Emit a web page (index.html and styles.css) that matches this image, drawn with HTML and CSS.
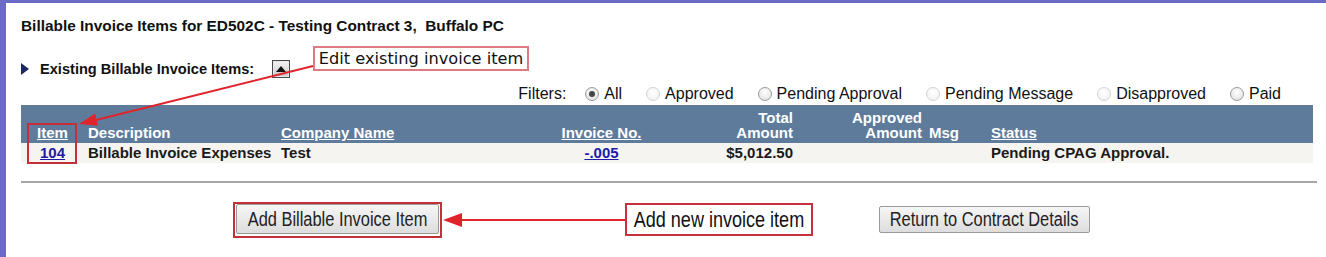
FILE: index.html
```html
<!DOCTYPE html>
<html>
<head>
<meta charset="utf-8">
<link rel="stylesheet" href="styles.css">
</head>
<body>
<div class="frame">
  <h1 class="title">Billable Invoice Items for ED502C - Testing Contract 3,&nbsp; Buffalo PC</h1>
  <div class="section-row">
    <svg class="section-tri" width="8" height="12" viewBox="0 0 8 12"><polygon points="0,0 8,6 0,12" fill="#1b2a5c"/></svg>
    <span class="section-label">Existing Billable Invoice Items:</span>
    <span class="collapse-btn"><svg width="10" height="6" viewBox="0 0 10 6"><polygon points="0,6 5,0 10,6" fill="#111"/></svg></span>
  </div>
  <div class="filters">
    <span class="filters-label">Filters:</span>
    <label class="opt"><span class="radio radio-on"></span>All</label>
    <label class="opt"><span class="radio radio-light"></span>Approved</label>
    <label class="opt"><span class="radio"></span>Pending Approval</label>
    <label class="opt"><span class="radio radio-light"></span>Pending Message</label>
    <label class="opt"><span class="radio radio-light"></span>Disapproved</label>
    <label class="opt"><span class="radio"></span>Paid</label>
  </div>
  <table class="items">
    <colgroup>
      <col class="c-item"><col class="c-desc"><col class="c-comp"><col class="c-inv"><col class="c-tot"><col class="c-appr"><col class="c-msg"><col class="c-status">
    </colgroup>
    <thead>
      <tr>
        <th class="center"><a class="hlink">Item</a></th>
        <th class="left">Description</th>
        <th class="left"><a class="hlink">Company Name</a></th>
        <th class="center"><a class="hlink">Invoice No.</a></th>
        <th class="right">Total<br>Amount</th>
        <th class="right">Approved<br>Amount</th>
        <th class="msg">Msg</th>
        <th class="left"><a class="hlink">Status</a></th>
      </tr>
    </thead>
    <tbody>
      <tr>
        <td class="center"><a class="dlink">104</a></td>
        <td class="left">Billable Invoice Expenses</td>
        <td class="left">Test</td>
        <td class="center"><a class="dlink">-.005</a></td>
        <td class="right">$5,012.50</td>
        <td class="right"></td>
        <td class="msg"></td>
        <td class="left">Pending CPAG Approval.</td>
      </tr>
    </tbody>
  </table>
  <hr class="divider">
  <div class="actions">
    <button class="btn btn-add"><span class="narrow">Add Billable Invoice Item</span></button>
    <button class="btn btn-return"><span class="narrow">Return to Contract Details</span></button>
  </div>
</div>

<div class="callout callout-edit">Edit existing invoice item</div>
<div class="callout callout-add"><span class="narrow">Add new invoice item</span></div>
<div class="hl hl-item"></div>
<div class="hl hl-add"></div>
<svg class="arrows" width="1326" height="257" viewBox="0 0 1326 257">
  <line x1="313" y1="66" x2="96" y2="120" stroke="#e0242c" stroke-width="2"/>
  <polygon points="79,124 97.9,125.8 95.1,113.6" fill="#e0242c"/>
  <line x1="625" y1="220" x2="460" y2="220" stroke="#e0242c" stroke-width="2"/>
  <polygon points="443,220 462,213 462,227" fill="#e0242c"/>
</svg>
</body>
</html>
```

FILE: styles.css
```css
html, body {
  margin: 0;
  padding: 0;
  height: 100%;
}
body {
  background: #ffffff;
  font-family: "Liberation Sans", Arial, sans-serif;
  color: #111;
  position: relative;
  overflow: hidden;
}
.frame {
  box-sizing: border-box;
  min-height: 100%;
  border-top: 3px solid #6b6bc6;
  border-left: 6px solid #6b6bc6;
  padding: 14px 9px 0 15px;
}
.title {
  margin: 0;
  font-size: 15.4px;
  line-height: 18px;
  font-weight: bold;
  color: #111;
}
.section-row {
  display: flex;
  align-items: center;
  height: 18px;
  margin-top: 25px;
}
.section-tri {
  display: block;
  margin-right: 11px;
}
.section-label {
  font-size: 14.6px;
  font-weight: bold;
  line-height: 18px;
}
.collapse-btn {
  box-sizing: border-box;
  width: 18px;
  height: 18px;
  margin-left: 18px;
  border: 1px solid #4a4a4a;
  background: linear-gradient(#f4f4f4, #c8c8c8);
  box-shadow: inset 0 0 0 1px #e6e6e6;
  display: flex;
  align-items: center;
  justify-content: center;
}
.collapse-btn svg {
  display: block;
  margin-top: -1px;
}
.filters {
  display: flex;
  justify-content: flex-end;
  align-items: center;
  height: 18px;
  margin-top: 7px;
  margin-right: 36px;
  font-size: 16px;
  line-height: 18px;
}
.filters-label {
  margin-right: 0;
}
.opt {
  display: flex;
  align-items: center;
  margin-left: 24px;
}
.opt:first-of-type {
  margin-left: 19px;
}
.radio {
  box-sizing: border-box;
  width: 14px;
  height: 14px;
  border-radius: 50%;
  border: 1px solid #9a9a9a;
  background: radial-gradient(circle at 50% 35%, #ffffff, #dcdcdc);
  margin-right: 5px;
  position: relative;
}
.radio-light {
  border-color: #d2d2d2;
  background: radial-gradient(circle at 50% 35%, #ffffff, #f0f0f0);
}
.radio-on::after {
  content: "";
  position: absolute;
  left: 3px;
  top: 3px;
  width: 6px;
  height: 6px;
  border-radius: 50%;
  background: #444;
}
.items {
  margin-top: 2px;
  width: 1292px;
  table-layout: fixed;
  border-collapse: collapse;
  font-size: 15px;
  font-weight: bold;
}
.c-item { width: 63px; }
.c-desc { width: 193px; }
.c-comp { width: 263px; }
.c-inv { width: 123px; }
.c-tot { width: 134px; }
.c-appr { width: 129px; }
.c-msg { width: 61px; }
.c-status { width: 326px; }
.items th {
  background: #5e7b9b;
  color: #ffffff;
  height: 38px;
  box-sizing: border-box;
  vertical-align: bottom;
  line-height: 15px;
  padding: 0 4px 3px 4px;
  font-weight: bold;
  white-space: nowrap;
}
.items td {
  background: #f5f4f1;
  color: #1a1a1a;
  height: 20px;
  line-height: 20px;
  padding: 0 4px;
  white-space: nowrap;
}
.items .left { text-align: left; }
.items .center { text-align: center; }
.items .right { text-align: right; }
.items .msg { text-align: left; padding-left: 3px; }
.hlink {
  color: #ffffff;
  text-decoration: underline;
}
.dlink {
  color: #1c1ca8;
  text-decoration: underline;
}
.divider {
  margin: 18px 0 0 0;
  border: 0;
  border-top: 2px solid #a6a6a6;
  height: 0;
}
.actions {
  display: flex;
  align-items: center;
  margin-top: 21px;
  padding-left: 215px;
}
.narrow {
  display: inline-block;
  flex-shrink: 0;
  white-space: nowrap;
  transform: scaleX(0.82);
}
.btn {
  font-family: "Liberation Sans", Arial, sans-serif;
  font-size: 20px;
  color: #222;
  background: linear-gradient(#f6f6f6, #dddddd);
  border: 1px solid #9a9a9a;
  border-radius: 2px;
  padding: 0;
  display: flex;
  align-items: center;
  justify-content: center;
  overflow: visible;
  cursor: default;
}
.btn-add {
  width: 203px;
  height: 30px;
}
.btn-return {
  width: 211px;
  height: 27px;
  margin-left: 440px;
}
.callout {
  position: absolute;
  box-sizing: border-box;
  background: #ffffff;
  color: #111;
  display: flex;
  align-items: center;
  justify-content: center;
  white-space: nowrap;
}
.callout-edit {
  left: 313px;
  top: 46px;
  width: 216px;
  height: 25px;
  border: 2px solid #df7a82;
  font-family: "DejaVu Sans", Verdana, sans-serif;
  font-size: 16.2px;
}
.callout-add {
  left: 625px;
  top: 203px;
  width: 188px;
  height: 33px;
  border: 2px solid #c8313b;
  font-family: "Liberation Sans", Arial, sans-serif;
  font-size: 22px;
}
.hl {
  position: absolute;
  box-sizing: border-box;
  border: 2px solid #c4303a;
}
.hl-item {
  left: 27px;
  top: 123px;
  width: 50px;
  height: 41px;
}
.hl-add {
  left: 233px;
  top: 202px;
  width: 209px;
  height: 36px;
}
.arrows {
  position: absolute;
  left: 0;
  top: 0;
  pointer-events: none;
}
```
